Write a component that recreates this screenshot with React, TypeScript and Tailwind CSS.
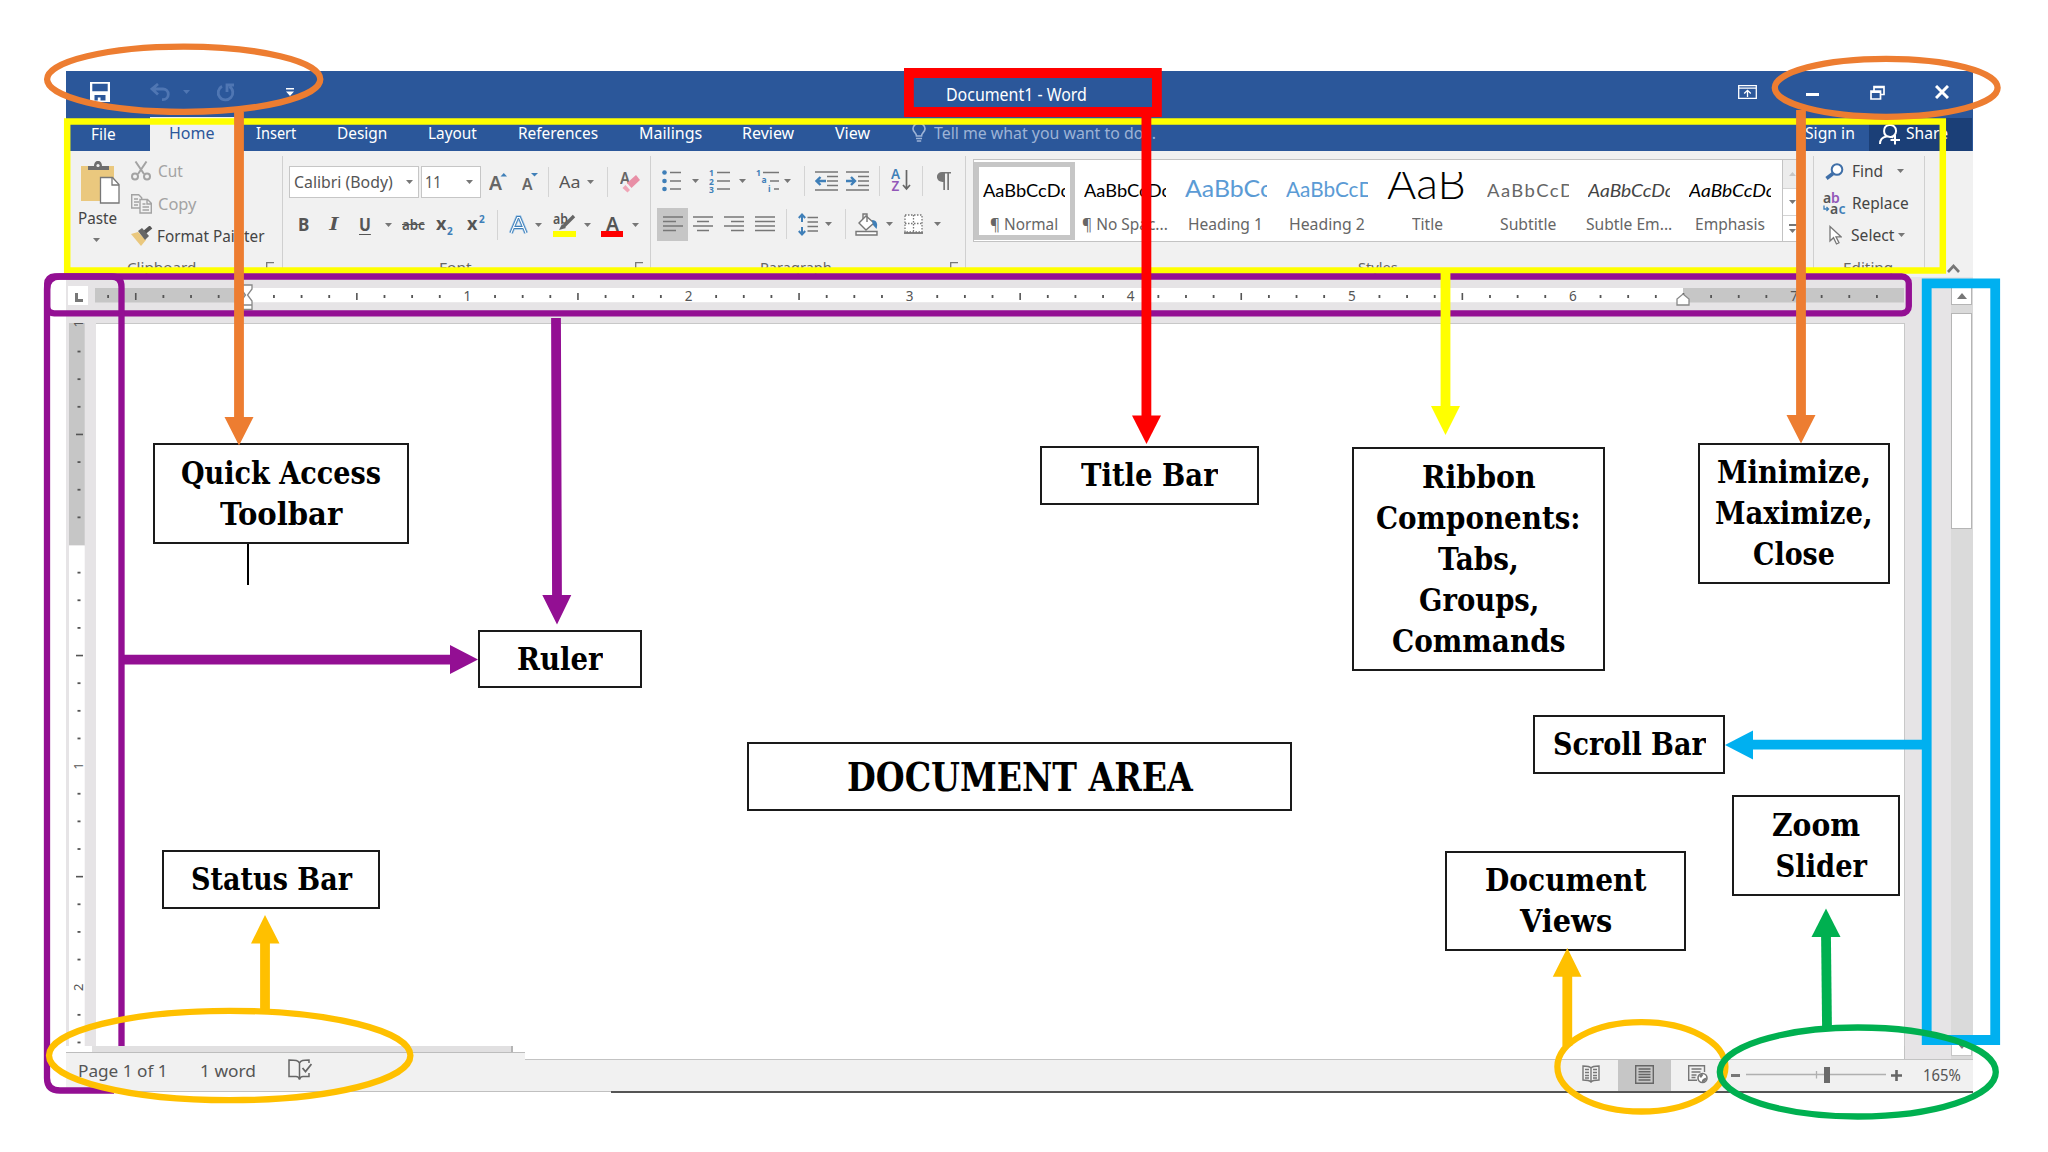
import React, { useLayoutEffect, useRef, useState } from 'react';

interface FitProps {
  w: number;
  className?: string;
  children: string;
}

// Text squeezed or stretched horizontally so that it takes exactly w pixels
const Fit: React.FC<FitProps> = ({ w, className = '', children }) => {
  const ref = useRef<HTMLSpanElement>(null);
  const [scale, setScale] = useState(1);

  useLayoutEffect(() => {
    if (ref.current) setScale(w / ref.current.offsetWidth);
  }, [w, children]);

  return (
    <span className={`inline-block shrink-0 text-left ${className}`} style={{ width: w }}>
      <span ref={ref} className="inline-block origin-left whitespace-pre" style={{ transform: `scaleX(${scale})` }}>
        {children}
      </span>
    </span>
  );
};

const Caret = ({ className = '' }: { className?: string }) => (
  <svg width="7" height="4" viewBox="0 0 7 4" className={className}>
    <path d="M0 0h7L3.5 4z" fill="currentColor" />
  </svg>
);

const Sep = ({ className = '' }: { className?: string }) => <div className={`h-[30px] w-px bg-[#d4d4d4] ${className}`} />;

const Launcher = () => (
  <svg width="8" height="8" viewBox="0 0 8 8" fill="none" stroke="#777" strokeWidth="1.3">
    <path d="M.7 8V.7H8" />
  </svg>
);

/* ---------- Title bar ---------- */

const TitleBar = () => (
  <div className="flex h-[47px] items-center bg-[#2b579a] pb-[5px] text-white [&>*]:shrink-0">
    <svg width="20" height="20" viewBox="0 0 20 20" className="ml-[24px]" fill="#fff">
      <path fillRule="evenodd" d="M0 0h20v20H0zM2.300 1.800v7.400h15.400V1.800zM4.500 13v5.500h3.300V15.500h2.700v3h5V13z" />
    </svg>
    <svg width="20" height="18" viewBox="0 0 20 18" className="ml-[40px]" fill="none" stroke="#4f76b3" strokeWidth="2.800">
      <path d="M8 1L2 6l6 5.500M2.500 6H13a5.300 5.300 0 0 1 0 10.600h-1" />
    </svg>
    <Caret className="ml-[13px] text-[#4f76b3]" />
    <svg width="19" height="19" viewBox="0 0 19 19" className="ml-[26px]" fill="none" stroke="#4f76b3" strokeWidth="2.800">
      <path d="M6 3.200A7.300 7.300 0 1 0 13.500 3.500M11 9V2h7" />
    </svg>
    <svg width="8" height="8" viewBox="0 0 8 8" className="ml-[51px]" fill="#fff">
      <path d="M0 0h8v1.400H0zM0 3.500h8L4 8z" />
    </svg>
    <Fit w={141} className="ml-[652px] mt-[4px] text-[17.500px]">Document1 - Word</Fit>
    <svg width="19" height="14" viewBox="0 0 19 14" className="ml-[651px]" fill="none" stroke="#fff" strokeWidth="1.300">
      <path d="M.7.7h17.600v12.600H.7zM.7 3.200h17.600M9.500 12V5.500M6.200 8.500l3.300-3.200 3.300 3.200" />
    </svg>
    <div className="ml-[49px] mt-[5px] h-[3px] w-[13px] bg-white" />
    <svg width="15" height="15" viewBox="0 0 15 15" className="ml-[51px]" fill="none" stroke="#fff" strokeWidth="1.700">
      <path d="M1 6h9.500v8H1zM1 7.200h9.500M4 5.500V1.500h10v8h-3M4 2.500h10" />
    </svg>
    <svg width="14" height="14" viewBox="0 0 14 14" className="ml-[50px]" stroke="#fff" strokeWidth="3">
      <path d="M1 1l12 12M13 1L1 13" />
    </svg>
  </div>
);

/* ---------- Tabs ---------- */

const Tabs = () => (
  <div className="flex h-[33px] bg-[#2b579a] pt-[3px] text-[16px] leading-[24px] text-white [&>*]:shrink-0">
    <Fit w={25} className="ml-[25px] mt-px">File</Fit>
    <div className="-mt-[4px] ml-[34px] h-[34px] w-[89px] bg-[#f1f1f1] pl-[19px] pt-[4px] text-[#2b579a]">
      <Fit w={46}>Home</Fit>
    </div>
    <Fit w={40} className="ml-[17px]">Insert</Fit>
    <Fit w={50} className="ml-[41px]">Design</Fit>
    <Fit w={49} className="ml-[41px]">Layout</Fit>
    <Fit w={80} className="ml-[41px]">References</Fit>
    <Fit w={63} className="ml-[41px]">Mailings</Fit>
    <Fit w={52} className="ml-[40px]">Review</Fit>
    <Fit w={35} className="ml-[41px]">View</Fit>
    <svg width="14" height="19" viewBox="0 0 14 19" className="ml-[42px] mt-[2px]" fill="none" stroke="#9db3d6" strokeWidth="1.700">
      <path d="M4.500 13C4.500 10 1 9 1 5.800a6 5.500 0 0 1 12 0C13 9 9.500 10 9.500 13zM4 15.500h6M4.800 18h4.400" />
    </svg>
    <Fit w={222} className="ml-[8px] text-[#9db3d6]">Tell me what you want to do...</Fit>
    <Fit w={50} className="ml-[649px]">Sign in</Fit>
    <div className="-mt-[3px] ml-[14px] flex h-[33px] w-[103px] bg-[#1b3f77] pl-[10px] pt-[3px]">
      <svg width="22" height="21" viewBox="0 0 22 21" className="mt-[3px]" fill="none" stroke="#fff" strokeWidth="2">
        <path d="M1 20c0-4.500 3-7 6.500-7.500M10 1a6 6 0 1 1 0 11.800A6 6 0 0 1 10 1zM12 12.500l2.500 1M16 11v9.500M11.500 16H21" />
      </svg>
      <Fit w={42} className="ml-[5px]">Share</Fit>
    </div>
  </div>
);

/* ---------- Ribbon groups ---------- */

const ClipboardGroup = () => (
  <div className="flex w-[216px] flex-col">
    <div className="flex h-[102px]">
      <div className="ml-[12px] flex w-[42px] flex-col pt-[10px]">
        <svg width="40" height="43" viewBox="0 0 40 43" className="ml-[2px]">
          <path d="M1 5h33v35H1z" fill="#eac87e" />
          <path d="M8 9V5h6c0-7 8-7 8 0h7v4z" fill="#6d6d6d" />
          <circle cx="18" cy="4.500" r="1.600" fill="#f1f1f1" />
          <path d="M20.500 16.500h12l6.500 7V42H20.500z" fill="#fff" stroke="#777" strokeWidth="1.300" />
          <path d="M32 16.500V24h7" fill="none" stroke="#777" strokeWidth="1.300" />
        </svg>
        <Fit w={39} className="mt-[2px] text-[16px] leading-[24px] text-[#444]">Paste</Fit>
        <Caret className="ml-[15px] mt-[8px] text-[#777]" />
      </div>
      <div className="ml-[11px] flex flex-col pt-[4px] text-[16px] leading-[32px] text-[#444]">
        <div className="flex h-[32px] items-center text-[#a3a3a3]">
          <svg width="20" height="20" viewBox="0 0 20 20" fill="none" stroke="#a3a3a3" strokeWidth="2">
            <path d="M4.500 0.500L13 13M15.500 0.500L7 13" />
            <circle cx="4" cy="15.500" r="3" />
            <circle cx="16" cy="15.500" r="3" />
          </svg>
          <Fit w={25} className="ml-[7px]">Cut</Fit>
        </div>
        <div className="flex h-[33px] items-center text-[#a3a3a3]">
          <svg width="21" height="20" viewBox="0 0 21 20" fill="#f1f1f1" stroke="#a3a3a3" strokeWidth="1.400">
            <path d="M.7.7h7l3 3V14H.7zM3 5h4M3 8h5M3 11h4" />
            <path d="M9 5.500h7.500l3.800 3.800V19H9zM16 5.500V10h4M11.500 10h3M11.500 13h6.500M11.500 16h6.500" />
          </svg>
          <Fit w={38} className="ml-[6px]">Copy</Fit>
        </div>
        <div className="flex h-[32px] items-center">
          <svg width="22" height="20" viewBox="0 0 22 20">
            <path d="M0 8l7-2 8 8-5 6z" fill="#eac87e" />
            <path d="M7 5l4-3 7 8-4 4z" fill="#666" />
            <path d="M14 6l6-5" stroke="#555" strokeWidth="4" />
          </svg>
          <Fit w={108} className="ml-[4px]">Format Painter</Fit>
        </div>
      </div>
    </div>
    <div className="flex items-start pt-[5px]">
      <Fit w={69} className="ml-[61px] text-[15px] leading-[20px] text-[#666]">Clipboard</Fit>
      <div className="ml-[70px] pt-[5px]"><Launcher /></div>
    </div>
  </div>
);

const FontGroup = () => (
  <div className="flex w-[367px] flex-col text-[#555]">
    <div className="mt-[15px] flex h-[32px] items-center pl-[6px] [&>*]:shrink-0">
      <div className="flex h-[32px] w-[130px] items-center justify-between border border-[#c6c6c6] bg-white pl-[4px] pr-[5px] text-[16px]">
        <Fit w={99}>Calibri (Body)</Fit>
        <Caret className="text-[#777]" />
      </div>
      <div className="ml-[2px] flex h-[32px] w-[60px] items-center justify-between border border-[#c6c6c6] bg-white pl-[3px] pr-[7px] text-[16px]">
        <Fit w={16}>11</Fit>
        <Caret className="text-[#777]" />
      </div>
      <svg width="18" height="20" viewBox="0 0 18 20" className="ml-[8px]" fontWeight="600" fontFamily="Noto Sans, sans-serif">
        <text x="0" y="18" fontSize="19" fill="#666" textLength="13" lengthAdjust="spacingAndGlyphs">A</text>
        <path d="M11.500 4.500L14.800 1l3.200 3.500z" fill="#3f7fb8" />
      </svg>
      <svg width="16" height="20" viewBox="0 0 16 20" className="ml-[15px]" fontWeight="600" fontFamily="Noto Sans, sans-serif">
        <text x="0" y="18" fontSize="15.500" fill="#666" textLength="10.500" lengthAdjust="spacingAndGlyphs">A</text>
        <path d="M9 1h7l-3.500 3.500z" fill="#3f7fb8" />
      </svg>
      <Sep className="ml-[10px]" />
      <Fit w={21} className="ml-[10px] text-[17px]">Aa</Fit>
      <Caret className="ml-[7px] text-[#777]" />
      <Sep className="ml-[13px]" />
      <svg width="20" height="22" viewBox="0 0 20 22" className="ml-[12px]">
        <text x="0" y="13" fontSize="16" fontWeight="600" fill="#666" textLength="10" lengthAdjust="spacingAndGlyphs" fontFamily="Noto Sans, sans-serif">A</text>
        <path d="M7 12l9-8 4 5-8.500 8z" fill="#e88fa6" />
        <path d="M5.500 14l4.500 5-2.500 2.500L2.500 17z" fill="#f0a5b6" />
      </svg>
    </div>
    <div className="mt-[10px] flex h-[34px] items-center pl-[15px] [&>*]:shrink-0">
      <Fit w={11} className="text-[17px] font-bold">B</Fit>
      <Fit w={9} className="ml-[20px] font-['Liberation_Serif',serif] text-[19px] font-bold italic">I</Fit>
      <Fit w={12} className="ml-[21px] text-[17px] font-bold [&>span]:underline [&>span]:underline-offset-[3px]">U</Fit>
      <Caret className="ml-[14px] text-[#777]" />
      <Fit w={23} className="ml-[10px] text-[15px] font-semibold [&>span]:line-through">abc</Fit>
      <svg width="17" height="22" viewBox="0 0 17 22" className="ml-[11px]" fontWeight="700" fontFamily="Noto Sans, sans-serif">
        <text x="0" y="16" fontSize="18" fill="#555">x</text>
        <text x="11" y="21" fontSize="10" fill="#3f7fb8">2</text>
      </svg>
      <svg width="18" height="22" viewBox="0 0 18 22" className="ml-[14px]" fontWeight="700" fontFamily="Noto Sans, sans-serif">
        <text x="0" y="16" fontSize="18" fill="#555">x</text>
        <text x="12" y="9" fontSize="10" fill="#3f7fb8">2</text>
      </svg>
      <Sep className="ml-[12px]" />
      <svg width="19" height="20" viewBox="0 0 19 20" className="ml-[11px]">
        <path d="M2 18L8.500 2.500h2L17 18M5 12.500h9" fill="none" stroke="#9cc3e6" strokeWidth="4.500" />
        <path d="M2 18L8.500 2.500h2L17 18M5 12.500h9" fill="none" stroke="#3f7fb8" strokeWidth="3" />
        <path d="M2 18L8.500 2.500h2L17 18M5 12.500h9" fill="none" stroke="#fff" strokeWidth="1.200" />
      </svg>
      <Caret className="ml-[7px] text-[#777]" />
      <svg width="23" height="24" viewBox="0 0 23 24" className="ml-[11px]">
        <text x="0" y="11" fontSize="14" fontWeight="600" fill="#555" textLength="15" lengthAdjust="spacingAndGlyphs" fontFamily="Noto Sans, sans-serif">ab</text>
        <path d="M21 3L10 14" stroke="#666" strokeWidth="3.400" />
        <path d="M9 11l4 4-7 2z" fill="#666" />
        <path d="M0 18h23v6H0z" fill="#ff0" />
      </svg>
      <Caret className="ml-[8px] text-[#777]" />
      <svg width="22" height="24" viewBox="0 0 22 24" className="ml-[10px]">
        <text x="5" y="18" fontSize="19" fontWeight="600" fill="#555" textLength="13" lengthAdjust="spacingAndGlyphs" fontFamily="Noto Sans, sans-serif">A</text>
        <path d="M0 18h22v6H0z" fill="#f00" />
      </svg>
      <Caret className="ml-[9px] text-[#777]" />
    </div>
    <div className="flex items-start">
      <Fit w={33} className="ml-[156px] mt-[16px] text-[15px] leading-[20px] text-[#666]">Font</Fit>
      <div className="ml-[163px] pt-[21px]"><Launcher /></div>
    </div>
  </div>
);

const Lines = ({ d, className = '' }: { d: string; className?: string }) => (
  <svg width="20" height="17" viewBox="0 0 20 17" className={className} fill="none" stroke="#777" strokeWidth="1.600">
    <path d={d} />
  </svg>
);

const ParagraphGroup = () => (
  <div className="flex w-[315px] flex-col text-[#777]">
    <div className="mt-[14px] flex h-[32px] items-center [&>*]:shrink-0">
      <svg width="19" height="22" viewBox="0 0 19 22" className="ml-[11px]" fill="#3f7fb8">
        <circle cx="2.500" cy="2.500" r="2.300" />
        <circle cx="2.500" cy="11" r="2.300" />
        <circle cx="2.500" cy="19" r="2.300" />
        <path d="M8 2.500h11M8 11h11M8 19h11" stroke="#777" strokeWidth="1.600" />
      </svg>
      <Caret className="ml-[11px]" />
      <svg width="21" height="24" viewBox="0 0 21 24" className="ml-[10px]" fontSize="8.500" fontWeight="700" fill="#3f7fb8" fontFamily="Noto Sans, sans-serif">
        <text x="0" y="7">1</text>
        <text x="0" y="15.500">2</text>
        <text x="0" y="24">3</text>
        <path d="M8 3.500h13M8 12h13M8 20h13" stroke="#777" strokeWidth="1.600" />
      </svg>
      <Caret className="ml-[9px]" />
      <svg width="23" height="24" viewBox="0 0 23 24" className="ml-[10px]" fontSize="8.500" fontWeight="700" fill="#3f7fb8" fontFamily="Noto Sans, sans-serif">
        <text x="0" y="7">1</text>
        <text x="5.500" y="14">a</text>
        <text x="12" y="23">i</text>
        <path d="M7 3.500h16M14 12h9M18 20h5" stroke="#777" strokeWidth="1.600" />
      </svg>
      <Caret className="ml-[5px]" />
      <Sep className="ml-[13px]" />
      <svg width="23" height="20" viewBox="0 0 23 20" className="ml-[10px]" fill="none" stroke="#777" strokeWidth="1.500">
        <path d="M0 1h23M12 5.500h11M12 10h11M12 14.500h11M0 19h23" />
        <path d="M11 10H2M5.500 6L1.500 10l4 4" stroke="#3f7fb8" strokeWidth="2.400" />
      </svg>
      <svg width="23" height="20" viewBox="0 0 23 20" className="ml-[8px]" fill="none" stroke="#777" strokeWidth="1.500">
        <path d="M0 1h23M12 5.500h11M12 10h11M12 14.500h11M0 19h23" />
        <path d="M0 10h9M5 6l4 4-4 4" stroke="#3f7fb8" strokeWidth="2.400" />
      </svg>
      <Sep className="ml-[10px]" />
      <svg width="20" height="23" viewBox="0 0 20 23" className="ml-[11px]" fontWeight="600" fontSize="13.500" fontFamily="Noto Sans, sans-serif">
        <text x="0" y="10" fill="#3f7fb8">A</text>
        <text x="0.500" y="22" fill="#9257b8">Z</text>
        <path d="M15.500 1v19M12 16l3.500 4 3.500-4" fill="none" stroke="#666" strokeWidth="1.700" />
      </svg>
      <Sep className="ml-[11px]" />
      <svg width="14" height="18" viewBox="0 0 14 18" className="ml-[14px]" fill="#777">
        <path d="M14 0v1.500h-2V18h-1.700V1.500H8V18H6.300V10C-2 10.500-2 0 5 0z" />
      </svg>
    </div>
    <div className="mt-[11px] flex h-[34px] items-center [&>*]:shrink-0">
      <div className="ml-[6px] flex h-[33px] w-[31px] items-center justify-center bg-[#c6c6c6]">
        <Lines d="M0 1h20M0 5.500h13M0 10h20M0 14.500h13" />
      </div>
      <Lines className="ml-[5px]" d="M0 1h20M4 5.500h12M0 10h20M4 14.500h12" />
      <Lines className="ml-[11px]" d="M0 1h20M7 5.500h13M0 10h20M7 14.500h13" />
      <Lines className="ml-[11px]" d="M0 1h20M0 5.500h20M0 10h20M0 14.500h20" />
      <Sep className="ml-[11px]" />
      <svg width="20" height="23" viewBox="0 0 20 23" className="ml-[11px]" fill="none" stroke="#777" strokeWidth="1.600">
        <path d="M9.500 4.500H20M9.500 9H20M9.500 13.500H20M9.500 18H20" />
        <path d="M4 9V1.500M.8 5L4 1.500 7.200 5M4 14v7.500M.8 18L4 21.500 7.200 18" stroke="#3f7fb8" strokeWidth="2" />
      </svg>
      <Caret className="ml-[7px]" />
      <Sep className="ml-[13px]" />
      <svg width="23" height="23" viewBox="0 0 23 23" className="ml-[9px]" stroke="#777" strokeWidth="1.400">
        <path d="M4 10l7-7 8 7-8 7z" fill="#fff" />
        <path d="M8 6V1h4v8" fill="none" />
        <path d="M17 7c5 0 6 4 4.500 9L18 12z" fill="#3f7fb8" stroke="none" />
        <path d="M1 18.500h21V22H1z" fill="#fff" />
      </svg>
      <Caret className="ml-[8px]" />
      <svg width="19" height="20" viewBox="0 0 19 20" className="ml-[11px]" stroke="#777" strokeWidth="1.300">
        <path d="M1 1h17v17H1z" fill="#fff" strokeDasharray="1.500 1.500" />
        <path d="M9.500 1v17M1 9.500h17" strokeDasharray="1.500 1.500" />
        <path d="M0 19h19" strokeWidth="1.800" />
      </svg>
      <Caret className="ml-[11px]" />
    </div>
    <div className="flex items-start">
      <Fit w={72} className="ml-[109px] mt-[16px] text-[15px] leading-[20px] text-[#666]">Paragraph</Fit>
      <div className="ml-[118px] pt-[21px]"><Launcher /></div>
    </div>
  </div>
);

interface StyleItem {
  sample: string;
  sampleClass: string;
  sampleW: number;
  label: string;
  labelW: number;
}

const styleItems: StyleItem[] = [
  { sample: 'AaBbCcDc', sampleClass: 'text-[17px] leading-[37px] text-black', sampleW: 86, label: '¶ Normal', labelW: 68 },
  { sample: 'AaBbCcDc', sampleClass: 'text-[17px] leading-[37px] text-black', sampleW: 86, label: '¶ No Spac...', labelW: 86 },
  { sample: 'AaBbCc', sampleClass: 'text-[24px] leading-[32px] text-[#5b9bd5]', sampleW: 87, label: 'Heading 1', labelW: 75 },
  { sample: 'AaBbCcD', sampleClass: 'text-[21px] leading-[34px] text-[#5b9bd5]', sampleW: 88, label: 'Heading 2', labelW: 76 },
  { sample: 'AaB', sampleClass: 'text-[43px] leading-[22px] font-light text-black', sampleW: 79, label: 'Title', labelW: 31 },
  { sample: 'AaBbCcD', sampleClass: 'text-[17px] leading-[37px] tracking-[1.300px] text-[#666]', sampleW: 88, label: 'Subtitle', labelW: 56 },
  { sample: 'AaBbCcDc', sampleClass: 'text-[17px] leading-[37px] italic text-[#444]', sampleW: 86, label: 'Subtle Em...', labelW: 86 },
  { sample: 'AaBbCcDc', sampleClass: 'text-[17px] leading-[37px] italic text-black', sampleW: 86, label: 'Emphasis', labelW: 70 },
];

const StylesGroup = () => (
  <div className="flex w-[847px] flex-col">
    <div className="ml-[7px] mt-[8px] flex h-[84px]">
      <div className="flex w-[810px] border border-[#c3c3c3] bg-white">
        {styleItems.map((item, i) => (
          <div
            key={item.label}
            className={`mt-[2px] flex h-[78px] w-[100.800px] shrink-0 flex-col items-center ${i === 0 ? 'border-[5px] border-[#c6c6c6] pt-[5px]' : 'pt-[10px]'}`}
          >
            <div className="flex h-[37px] w-[82px] shrink-0 items-start overflow-hidden">
              <Fit w={item.sampleW} className={`font-[Lato,sans-serif] ${item.sampleClass}`}>{item.sample}</Fit>
            </div>
            <Fit w={item.labelW} className="mt-[3px] text-[16px] leading-[24px] text-[#666]">{item.label}</Fit>
          </div>
        ))}
      </div>
      <div className="flex w-[18px] flex-col border-y border-[#c3c3c3] bg-white text-[#777]">
        <div className="flex h-[29px] items-center border-b border-[#d4d4d4] bg-[#ececec] pl-[6px] text-[#c6c6c6]">
          <Caret className="rotate-180" />
        </div>
        <div className="flex h-[27px] items-center border-b border-[#d4d4d4] pl-[6px]">
          <Caret />
        </div>
        <div className="flex flex-1 flex-col justify-center gap-[3px] pl-[6px]">
          <div className="h-[1.500px] w-[8px] bg-[#777]" />
          <Caret />
        </div>
      </div>
    </div>
    <Fit w={40} className="ml-[392px] mt-[15px] text-[15px] leading-[20px] text-[#666]">Styles</Fit>
  </div>
);

const EditingGroup = () => (
  <div className="flex w-[110px] flex-col pt-[4px] text-[16px] leading-[32px] text-[#444]">
    <div className="flex h-[32px] items-center">
      <svg width="19" height="17" viewBox="0 0 19 17" className="ml-[11px]" fill="none" stroke="#3f6fa8">
        <circle cx="12" cy="6.500" r="5.300" strokeWidth="2" fill="#fff" />
        <path d="M8 10.500L1.500 15.500" strokeWidth="3.600" />
      </svg>
      <Fit w={31} className="ml-[8px]">Find</Fit>
      <Caret className="ml-[14px] text-[#777]" />
    </div>
    <div className="flex h-[32px] items-center">
      <svg width="23" height="23" viewBox="0 0 23 23" className="ml-[9px]" fontSize="14" fontWeight="600" fontFamily="Noto Sans, sans-serif">
        <text x="0" y="11" fill="#555">a</text>
        <text x="8" y="11" fill="#9257b8">b</text>
        <text x="7" y="21.500" fill="#555">a</text>
        <text x="15.500" y="21.500" fill="#3f7fb8">c</text>
        <path d="M1 13.500v3.500h4M3.500 15l2 2-2 2" fill="none" stroke="#3f7fb8" strokeWidth="1.300" />
      </svg>
      <Fit w={57} className="ml-[6px]">Replace</Fit>
    </div>
    <div className="flex h-[33px] items-center">
      <svg width="13" height="20" viewBox="0 0 13 20" className="ml-[15px]" fill="#fff" stroke="#777" strokeWidth="1.300">
        <path d="M1 1.500v14.500l3.500-3.300L7.500 19l2.500-1.200-3-6H12z" />
      </svg>
      <Fit w={43} className="ml-[9px]">Select</Fit>
      <Caret className="ml-[4px] text-[#777]" />
    </div>
    <Fit w={50} className="ml-[29px] mt-[6px] text-[15px] leading-[20px] text-[#666]">Editing</Fit>
  </div>
);

const GroupDivider = () => <div className="mt-[5px] h-[113px] w-px shrink-0 bg-[#d0d0d0]" />;

const Ribbon = () => (
  <div className="flex h-[126px] bg-[#f1f1f1]">
    <ClipboardGroup />
    <GroupDivider />
    <FontGroup />
    <GroupDivider />
    <div className="-mr-px flex"><ParagraphGroup /></div>
    <GroupDivider />
    <StylesGroup />
    <GroupDivider />
    <EditingGroup />
    <GroupDivider />
    <svg width="13" height="9" viewBox="0 0 13 9" className="ml-[22px] mt-[113px]" fill="none" stroke="#777" strokeWidth="2.600">
      <path d="M1 8l5.500-6L12 8" />
    </svg>
  </div>
);

/* ---------- Rulers ---------- */

const INCH = 221.1;

interface Tick {
  pos: number;
  kind: 'dot' | 'half' | 'inch';
  label: string;
}

const makeTicks = (origin: number, from: number, to: number): Tick[] => {
  const ticks: Tick[] = [];
  for (let i = from; i <= to; i++) {
    if (i === 0) continue;
    const kind = i % 8 === 0 ? 'inch' : i % 4 === 0 ? 'half' : 'dot';
    ticks.push({ pos: origin + (i * INCH) / 8, kind, label: String(Math.abs(i / 8)) });
  }
  return ticks;
};

const HorizontalRuler = () => (
  <svg width="1809" height="46" viewBox="0 0 1809 46" className="ml-[7px] shrink-0" fontFamily="Noto Sans, sans-serif">
    <path d="M0 11h1809v14.500H0z" fill="#c6c6c6" />
    <path d="M152 11h1436v14.500H152z" fill="#fff" />
    {makeTicks(151.3, -5, 59).map((t) =>
      t.kind === 'inch' ? (
        <text key={t.pos} x={t.pos} y="23.500" fontSize="13.500" fill="#555" textAnchor="middle">{t.label}</text>
      ) : t.kind === 'half' ? (
        <rect key={t.pos} x={t.pos - 0.8} y="16" width="1.600" height="7" fill="#555" />
      ) : (
        <rect key={t.pos} x={t.pos - 0.9} y="18" width="1.800" height="3" fill="#555" />
      )
    )}
    <path d="M146 8h11v4l-4.500 6 4.500 6v8.500h-11V24l4.500-6-4.500-6zM146 28h11" fill="#fff" stroke="#888" strokeWidth="1.300" />
    <path d="M1582 28v-6l6-5 6 5v6z" fill="#fff" stroke="#888" strokeWidth="1.300" />
  </svg>
);

const VerticalRuler = () => (
  <svg width="30" height="723" viewBox="0 0 30 723" className="shrink-0" fontFamily="Noto Sans, sans-serif">
    <path d="M0 0h30v723H0z" fill="#e6e4e6" />
    <path d="M3 0h15.700v222.500H3z" fill="#c6c6c6" />
    <path d="M3 222.500h15.700V723H3z" fill="#fff" />
    {makeTicks(222, -8, 18).map((t) =>
      t.kind === 'inch' ? (
        <text key={t.pos} transform={`translate(17 ${t.pos}) rotate(-90)`} fontSize="13" fill="#555" textAnchor="middle">{t.label}</text>
      ) : t.kind === 'half' ? (
        <rect key={t.pos} x="10" y={t.pos - 0.8} width="7" height="1.600" fill="#555" />
      ) : (
        <rect key={t.pos} x="11.500" y={t.pos - 0.9} width="3" height="1.800" fill="#555" />
      )
    )}
  </svg>
);

/* ---------- Document area ---------- */

const Workspace = () => (
  <div className="flex h-[783px] bg-[#e6e4e6]">
    <div className="flex w-[1885px] flex-col">
      <div className="flex h-[46px] shrink-0">
        <div className="ml-[2px] mt-[9px] flex h-[19px] w-[20px] items-center justify-center bg-white">
          <div className="ml-[2px] mt-[3px] h-[9px] w-[8px] border-b-[3px] border-l-[3px] border-[#777]" />
        </div>
        <HorizontalRuler />
      </div>
      <div className="flex h-[723px] shrink-0">
        <VerticalRuler />
        <div className="w-[1809px] border-r border-t border-[#c8c8c8] bg-white pl-[151px] pt-[220px]">
          <div className="h-[41px] w-[1.500px] bg-black" />
        </div>
      </div>
      <div className="flex h-[14px] shrink-0">
        <div className="w-[459px] bg-[#f1f1f1]">
          <div className="flex h-[6px] bg-white">
            <div className="ml-[26px] w-[421px] border-r-2 border-[#b5b5b5] bg-[#e1e0e1]" />
          </div>
          <div className="h-px bg-[#bdbdbd]" />
        </div>
        <div className="w-[1380px] border-b border-r border-[#c3c3c3] bg-white" />
        <div className="flex-1 border-b border-[#c3c3c3]" />
      </div>
    </div>
    <div className="flex w-[22px] flex-col border-b border-[#c3c3c3] bg-[#dadada]">
      <div className="h-[9px] bg-[#e6e4e6]" />
      <div className="flex h-[19px] w-[21px] items-center justify-center border border-[#b5b5b5] bg-white text-[#777]">
        <svg width="10" height="6" viewBox="0 0 10 6"><path d="M0 6l5-6 5 6z" fill="currentColor" /></svg>
      </div>
      <div className="mt-[8px] h-[216px] w-[21px] border border-[#b5b5b5] bg-white" />
      <div className="mt-auto mb-[3px] flex h-[20px] w-[21px] items-center justify-center border border-[#c6c6c6] bg-white text-[#777]">
        <svg width="10" height="6" viewBox="0 0 10 6"><path d="M0 0l5 6 5-6z" fill="currentColor" /></svg>
      </div>
    </div>
  </div>
);

const StatusBar = () => (
  <div className="flex h-[31px] items-center bg-[#f1f1f1] text-[17px] text-[#555] [&>*]:shrink-0">
    <Fit w={90} className="mb-[9px] ml-[12px]">Page 1 of 1</Fit>
    <Fit w={56} className="mb-[9px] ml-[32px]">1 word</Fit>
    <svg width="24" height="22" viewBox="0 0 24 22" className="mb-[12px] ml-[32px]" fill="none" stroke="#666" strokeWidth="1.500">
      <path d="M11.500 20.500V4C10 1.500 8 1 1 1v16.500h7c2 0 3 1 3.500 3 .5-2 1.500-3 3.500-3h6V14M11.500 4C13 1.500 15 1 21 1v3" />
      <path d="M14.500 9l3 3.500L23.500 5" strokeWidth="1.800" />
    </svg>
    <svg width="18" height="18" viewBox="0 0 18 18" className="ml-[1270px] mb-[3px]" fill="none" stroke="#777" strokeWidth="1.400">
      <path d="M9 3C7.500 1 5 1 1 1v14c4 0 6.500 0 8 2 1.500-2 4-2 8-2V1c-4 0-6.500 0-8 2v14" />
      <path d="M3 4.500h4M3 7.500h4M3 10.500h4M3 13h4M11 4.500h4M11 7.500h4M11 10.500h4M11 13h4" />
    </svg>
    <div className="ml-[18px] flex h-[31px] w-[53px] items-center justify-center bg-[#c6c6c6] pb-[3px]">
      <svg width="19" height="19" viewBox="0 0 19 19" fill="none" stroke="#666" strokeWidth="1.400">
        <path d="M.7.7h17.600v17.600H.7zM3.500 4h12M3.500 6.800h12M3.500 9.500h12M3.500 12.200h12M3.500 15h12" />
      </svg>
    </div>
    <svg width="20" height="19" viewBox="0 0 20 19" className="mb-[3px] ml-[17px]" fill="none" stroke="#777" strokeWidth="1.400">
      <path d="M9 15.300H.7V.7h15.800V7M3.500 4h10M3.500 7h9M3.500 10h5M3.500 12.500h4" />
      <circle cx="14.500" cy="13" r="4.500" fill="#fff" strokeWidth="1.600" />
      <path d="M11 11c1.500-2.500 3.500-2.500 4-1.500s-1 2-2 3.500zM14 17c-.5-2 1-4 4.500-4.500 0 3-2 5-4.500 4.500z" fill="#777" stroke="none" />
    </svg>
    <div className="ml-[23px] h-[3px] w-[9px] bg-[#777]" />
    <svg width="140" height="16" viewBox="0 0 140 16" className="mb-[2px] ml-[6px]">
      <path d="M0 7.500h140M70.500 4v7.500" stroke="#b0b0b0" strokeWidth="1.300" />
      <path d="M78 0h6v16h-6z" fill="#6a6a6a" />
    </svg>
    <svg width="11" height="11" viewBox="0 0 11 11" className="mb-px ml-[5px]">
      <path d="M5.500 0v11M0 5.500h11" stroke="#666" strokeWidth="2.600" />
    </svg>
    <Fit w={38} className="mb-[2px] ml-[21px] text-[16px]">165%</Fit>
  </div>
);

/* ---------- Callouts ---------- */

interface CalloutProps {
  className: string;
  lines: [string, number][];
}

const Callout: React.FC<CalloutProps> = ({ className, lines }) => (
  <div className={`absolute flex flex-col items-center justify-center border-2 border-[#1a1a1a] bg-white text-[31px] font-bold leading-[41px] text-black ${className}`}>
    {lines.map(([text, w]) => (
      <Fit key={text} w={w}>{text}</Fit>
    ))}
  </div>
);

const Callouts = () => (
  <div className="font-['DejaVu_Serif_Condensed','DejaVu_Serif',serif]">
    <Callout className="left-[153px] top-[443px] h-[101px] w-[256px]" lines={[['Quick Access', 200], ['Toolbar', 122]]} />
    <Callout className="left-[478px] top-[630px] h-[58px] w-[164px]" lines={[['Ruler', 86]]} />
    <Callout className="left-[1040px] top-[446px] h-[59px] w-[219px]" lines={[['Title Bar', 137]]} />
    <Callout
      className="left-[1352px] top-[447px] h-[224px] w-[253px]"
      lines={[['Ribbon', 114], ['Components:', 205], ['Tabs,', 81], ['Groups,', 120], ['Commands', 173]]}
    />
    <Callout className="left-[1698px] top-[443px] h-[141px] w-[192px]" lines={[['Minimize,', 154], ['Maximize,', 158], ['Close', 82]]} />
    <Callout className="left-[1533px] top-[715px] h-[59px] w-[192px]" lines={[['Scroll Bar', 153]]} />
    <Callout className="left-[1732px] top-[795px] h-[101px] w-[168px]" lines={[['Zoom', 88], [' Slider', 101]]} />
    <Callout className="left-[1445px] top-[851px] h-[100px] w-[241px]" lines={[['Document', 161], ['Views', 92]]} />
    <Callout className="left-[162px] top-[850px] h-[59px] w-[218px]" lines={[['Status Bar', 161]]} />
    <Callout className="left-[747px] top-[742px] h-[69px] w-[545px] text-[39px]! leading-[50px]!" lines={[['DOCUMENT AREA', 346]]} />
  </div>
);

// Frames, ellipses and arrows drawn over the window
const Markup = () => (
  <svg width="2048" height="1152" viewBox="0 0 2048 1152" className="absolute left-0 top-0" fill="none">
    <path d="M67.200 121.500h1875.600v149H67.200z" stroke="#ffff00" strokeWidth="6.500" />
    <g stroke="#930f93" strokeWidth="6.300">
      <rect x="47.200" y="276.500" width="1861.600" height="36.800" rx="7" />
      <path d="M121.500 1046V287q0-10.500-10-10.500H60q-13 0-13 13V1078q0 12.500 13 12.500h54" />
      <path d="M556 318l1 280M124 659.700h328" strokeWidth="9.800" />
    </g>
    <path d="M542.300 595h29L557 624.500zM450 645v29l28-14.500z" fill="#930f93" />
    <path d="M1445.500 268v140" stroke="#ffff00" strokeWidth="9.800" />
    <path d="M1431 406h29l-14.500 29z" fill="#ffff00" />
    <path d="M908.900 73h248v39h-248z" stroke="#ff0000" strokeWidth="9.800" />
    <path d="M1146.400 112v306" stroke="#ff0000" strokeWidth="9.800" />
    <path d="M1132 415.500h29l-14.500 28.500z" fill="#ff0000" />
    <g stroke="#ed7d31" strokeWidth="6.300">
      <ellipse cx="183.700" cy="79.300" rx="136.600" ry="32.600" />
      <ellipse cx="1886.200" cy="87.800" rx="111.400" ry="29" />
      <path d="M239 112v307M1801 110v308" strokeWidth="9.800" />
    </g>
    <path d="M224.500 417h29L239 445.500zM1786.500 415h29L1801 443.500z" fill="#ed7d31" />
    <path d="M1926.700 283.300h68.500V1040h-68.500zM1751 744.600h175" stroke="#00b0f0" strokeWidth="9.800" />
    <path d="M1753 730.500v29l-28-14.500z" fill="#00b0f0" />
    <g stroke="#ffc000" strokeWidth="6.300">
      <ellipse cx="229.700" cy="1055.500" rx="180.700" ry="44.700" />
      <ellipse cx="1641.400" cy="1066.800" rx="84" ry="44.700" />
      <path d="M265 942v68M1567.300 975v71" strokeWidth="9.800" />
    </g>
    <path d="M251 943.500h28.500L265 915zM1552.800 976.700h28.700L1567.300 948z" fill="#ffc000" />
    <ellipse cx="1857.800" cy="1072" rx="138" ry="44.500" stroke="#00b050" strokeWidth="6.300" />
    <path d="M1826 935l1 92" stroke="#00b050" strokeWidth="9.800" />
    <path d="M1811.500 937h29L1826 908.500z" fill="#00b050" />
  </svg>
);

const App = () => (
  <div className="relative h-[1152px] w-[2048px] overflow-hidden bg-white pl-[66px] pt-[71px] font-['Noto_Sans','Open_Sans',sans-serif]">
    <div className="flex w-[1907px] flex-col">
      <TitleBar />
      <Tabs />
      <Ribbon />
      <Workspace />
      <StatusBar />
      <div className="flex">
        <div className="h-px w-[545px] bg-[#c0c0c0]" />
        <div className="h-[1.500px] flex-1 bg-[#555]" />
      </div>
    </div>
    <Callouts />
    <Markup />
  </div>
);

export default App;
